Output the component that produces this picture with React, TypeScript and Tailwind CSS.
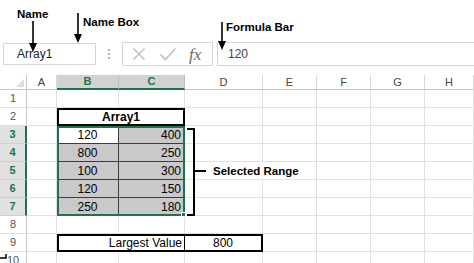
import React from 'react';

const FONT = { fontFamily: '"Liberation Sans", Arial, sans-serif' };

const colStart = ['col-start-1', 'col-start-2', 'col-start-3', 'col-start-4', 'col-start-5', 'col-start-6', 'col-start-7', 'col-start-8', 'col-start-9'];
const rowStart = ['row-start-1', 'row-start-2', 'row-start-3', 'row-start-4', 'row-start-5', 'row-start-6', 'row-start-7', 'row-start-8', 'row-start-9', 'row-start-10', 'row-start-11'];

const COLS = ['A', 'B', 'C', 'D', 'E', 'F', 'G', 'H'];
const colB = ['120', '800', '100', '120', '250'];
const colC = ['400', '250', '300', '150', '180'];

const GREEN = 'text-[#217346]';

function at(col: number, row: number) {
  return `${colStart[col]} ${rowStart[row]}`;
}

function Toolbar() {
  return (
    <div className="relative h-[75px]">
      {/* callout labels */}
      <span className="absolute left-[17px] top-[7px] text-[11.5px] font-bold text-black leading-[14px]">Name</span>
      <span className="absolute left-[83px] top-[15px] text-[11.5px] font-bold text-black leading-[14px]">Name Box</span>
      <span className="absolute left-[226px] top-[20px] text-[11.5px] font-bold text-black leading-[14px]">Formula Bar</span>

      <div className="flex pt-[42px] h-[66px]">
        <div className="ml-[3px] mt-[1px] w-[93px] h-[22px] border border-[#d6d6d6] bg-white flex items-center pl-[13px] text-[12px] text-[#222]">
          Array1
        </div>
        <div className="w-[26px] flex flex-col items-center justify-center gap-[2px]">
          <span className="w-[2px] h-[2px] bg-[#b5b5b5]" />
          <span className="w-[2px] h-[2px] bg-[#b5b5b5]" />
          <span className="w-[2px] h-[2px] bg-[#b5b5b5]" />
        </div>
        <div className="w-[91px] h-[24px] border border-[#d6d6d6] flex items-center">
          <svg width="14" height="14" viewBox="0 0 14 14" className="ml-[9px]">
            <path d="M1.5 1.5 L12.5 12.5 M12.5 1.5 L1.5 12.5" stroke="#c3c3c3" strokeWidth="1.6" fill="none" />
          </svg>
          <svg width="18" height="14" viewBox="0 0 18 14" className="ml-[13px]">
            <path d="M1.5 7.5 L6.5 12.5 L16.5 1.5" stroke="#c3c3c3" strokeWidth="1.8" fill="none" />
          </svg>
          <span
            className="ml-[12px] text-[17px] italic text-[#6a6a6a] leading-none"
            style={{ fontFamily: '"Liberation Serif", "Times New Roman", serif' }}
          >
            fx
          </span>
        </div>
        <div className="ml-[4px] flex-1 h-[24px] border border-[#d6d6d6] border-r-0 flex items-center pl-[10px] text-[12px] text-[#444]">
          120
        </div>
      </div>

      {/* callout arrows */}
      <svg className="absolute inset-0 pointer-events-none" width="474" height="75" viewBox="0 0 474 75">
        <line x1="33" y1="21" x2="33" y2="46" stroke="#000" strokeWidth="1.6" />
        <path d="M29 43 L33 52 L37 43 Z" fill="#000" />
        <line x1="78" y1="13" x2="78" y2="37" stroke="#000" strokeWidth="1.6" />
        <path d="M74 34 L78 43 L82 34 Z" fill="#000" />
        <line x1="222" y1="22" x2="222" y2="44" stroke="#000" strokeWidth="1.6" />
        <path d="M218 41 L222 50 L226 41 Z" fill="#000" />
      </svg>
    </div>
  );
}

function Sheet() {
  const cells: React.ReactNode[] = [];

  // corner
  cells.push(
    <div key="corner" className={`${at(0, 0)} border-r border-b border-[#c6c6c6] flex items-end justify-end pr-[2px] pb-[2px]`}>
      <svg width="8" height="8" viewBox="0 0 8 8">
        <path d="M8 0 L8 8 L0 8 Z" fill="#dcdcdc" />
      </svg>
    </div>
  );

  // column headers
  COLS.forEach((c, i) => {
    const sel = c === 'B' || c === 'C';
    cells.push(
      <div
        key={`h${c}`}
        className={`${at(i + 1, 0)} flex items-center justify-center text-[11px] border-r ${
          sel
            ? `bg-[#d2d2d2] border-[#bdbdbd] border-b-2 border-b-[#217346] font-bold ${GREEN}`
            : 'bg-white border-[#d9d9d9] border-b border-b-[#c6c6c6] text-[#444]'
        }`}
      >
        {c}
      </div>
    );
  });

  for (let r = 1; r <= 10; r++) {
    const selRow = r >= 3 && r <= 7;
    cells.push(
      <div
        key={`r${r}`}
        className={`${at(0, r)} flex items-center justify-center text-[11px] border-b ${
          selRow
            ? `bg-[#e1e1e1] border-b-[#cfcfcf] border-r-2 border-r-[#217346] font-bold ${GREEN}`
            : 'bg-white border-b-[#e1e1e1] border-r border-r-[#c6c6c6] text-[#555]'
        }`}
      >
        {r}
      </div>
    );

    for (let c = 1; c <= 8; c++) {
      const key = `${COLS[c - 1]}${r}`;
      if (r === 2 && c === 2) {
        cells.push(
          <div key={key} className={`${at(2, r)} col-span-2 border-2 border-black flex items-center justify-center text-[12px] font-bold text-black`}>
            Array1
          </div>
        );
        continue;
      }
      if (r === 2 && c === 3) continue;
      if (selRow && (c === 2 || c === 3)) {
        const idx = r - 3;
        const white = r === 3 && c === 2;
        cells.push(
          <div
            key={key}
            className={`${at(c, r)} border-r border-b border-[#3c3c3c] flex items-center text-[12px] text-black ${
              white ? 'bg-white' : 'bg-[#c9c9c9]'
            } ${c === 2 ? 'justify-center' : 'justify-end pr-[3px]'}`}
          >
            {c === 2 ? colB[idx] : colC[idx]}
          </div>
        );
        continue;
      }
      if (r === 9 && c === 2) {
        cells.push(
          <div key={key} className={`${at(2, r)} col-span-2 border-y-2 border-l-2 border-r border-black flex items-center justify-end pr-[2px] text-[12px] text-black`}>
            Largest Value
          </div>
        );
        continue;
      }
      if (r === 9 && c === 3) continue;
      if (r === 9 && c === 4) {
        cells.push(
          <div key={key} className={`${at(4, r)} border-y-2 border-r-2 border-black flex items-center justify-center text-[12px] text-black`}>
            800
          </div>
        );
        continue;
      }
      cells.push(<div key={key} className={`${at(c, r)} border-r border-b border-[#e1e1e1]`} />);
    }
  }

  return (
    <div
      className="relative grid grid-cols-[27px_30px_62px_66px_78px_54px_54px_54px_1fr] grid-rows-[15px_repeat(10,18px)]"
    >
      {cells}

      {/* selected range outline */}
      <div className="col-start-3 col-span-2 row-start-4 row-span-5 relative border-2 border-[#217346] pointer-events-none">
        <span className="absolute -right-[3px] -bottom-[3px] w-[5px] h-[5px] bg-[#217346] border border-white" />
      </div>

      {/* bracket callout */}
      <div className="col-start-5 row-start-4 row-span-5 flex items-center pointer-events-none">
        <div className="shrink-0 ml-[2px] w-[8px] self-stretch mt-[2px] border-y-2 border-r-2 border-black" />
        <div className="shrink-0 w-[11px] h-[2px] bg-black" />
        <span className="shrink-0 ml-[7px] h-[16px] leading-[16px] bg-white whitespace-nowrap text-[11.5px] font-bold text-black">
          Selected Range
        </span>
      </div>

      {/* stray arrow end at lower left */}
      <svg className="absolute left-0 top-[179px] pointer-events-none" width="8" height="12" viewBox="0 0 8 12">
        <path d="M6 0 L6 4 L0 4" stroke="#000" strokeWidth="1.5" fill="none" />
      </svg>
    </div>
  );
}

export default function App() {
  return (
    <div className="w-[474px] h-[263px] overflow-hidden bg-white" style={FONT}>
      <Toolbar />
      <Sheet />
    </div>
  );
}
